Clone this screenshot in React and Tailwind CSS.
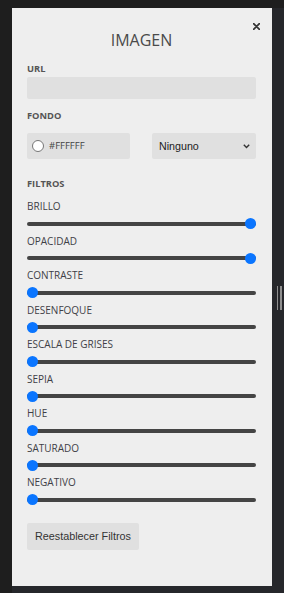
import React from 'react';

const FILTERS = [
    { name: 'BRILLO', max: true },
    { name: 'OPACIDAD', max: true },
    { name: 'CONTRASTE', max: false },
    { name: 'DESENFOQUE', max: false },
    { name: 'ESCALA DE GRISES', max: false },
    { name: 'SEPIA', max: false },
    { name: 'HUE', max: false },
    { name: 'SATURADO', max: false },
    { name: 'NEGATIVO', max: false },
];

const Slider = ({ max }) => (
    <div className="relative h-[11px] flex items-center">
        <div className="h-[4px] w-full rounded-full bg-[#444444]" />
        <div className={`absolute top-0 w-[11px] h-[11px] rounded-full bg-[#0a75ff] ${max ? 'right-0' : 'left-0'}`} />
    </div>
);

const SectionLabel = ({ children, className = '' }) => (
    <div className={`text-[9.3px] leading-[12px] font-bold text-[#555555] ${className}`}>{children}</div>
);

const App = () => {
    return (
        <div className="w-[284px] h-[593px] bg-[#1e1e1e] pt-2 pl-3 overflow-hidden font-['Open_Sans',sans-serif]">
            <div className="h-full flex bg-[#26272b]">
                {/* Panel */}
                <div className="relative w-[260px] h-[578px] shrink-0 bg-[#eeeeee] pt-[21px] pl-[15px] pr-[16px]">
                    <button className="absolute top-[15px] right-[12px] w-[7px] h-[7px]">
                        <svg viewBox="0 0 7 7" width="7" height="7" className="block">
                            <path d="M0.6 0.6 L6.4 6.4 M6.4 0.6 L0.6 6.4" stroke="#333333" strokeWidth="1.7" strokeLinecap="round" />
                        </svg>
                    </button>

                    <h1 className="text-center text-[16px] leading-[22px] text-[#4a4a4a]">IMAGEN</h1>

                    <SectionLabel className="mt-[12px]">URL</SectionLabel>
                    <div className="mt-[2px] h-[22px] w-full rounded-[2px] bg-[#e0e0e0]" />

                    <SectionLabel className="mt-[11px]">FONDO</SectionLabel>
                    <div className="mt-[11px] flex justify-between">
                        <div className="w-[103px] h-[26px] rounded-[2px] bg-[#e0e0e0] flex items-center pl-[5px] gap-[5px]">
                            <div className="w-[12px] h-[12px] rounded-full bg-white border border-[#767676]" />
                            <span className="text-[9.5px] text-[#444444]">#FFFFFF</span>
                        </div>
                        <div className="w-[104px] h-[26px] rounded-[2px] bg-[#e0e0e0] flex items-center justify-between pl-[7px] pr-[6px] font-['Liberation_Sans',Arial,sans-serif]">
                            <span className="text-[10.7px] text-[#222222]">Ninguno</span>
                            <svg viewBox="0 0 7 5" width="7" height="5" className="block">
                                <path d="M0.8 0.8 L3.5 3.6 L6.2 0.8" fill="none" stroke="#333333" strokeWidth="1.4" />
                            </svg>
                        </div>
                    </div>

                    <SectionLabel className="mt-[19px]">FILTROS</SectionLabel>
                    <div className="mt-[9px] flex flex-col gap-[4.5px]">
                        {FILTERS.map((f) => (
                            <div key={f.name}>
                                <div className="text-[10px] leading-[14px] text-[#3f3f46] mb-[5px]">{f.name}</div>
                                <Slider max={f.max} />
                            </div>
                        ))}
                    </div>

                    <button className="mt-[17.5px] h-[27px] px-[8px] rounded-[2px] bg-[#e0e0e0] text-[10.8px] text-[#333333] font-['Liberation_Sans',Arial,sans-serif]">
                        Reestablecer Filtros
                    </button>
                </div>

                {/* Resize handle */}
                <div className="flex-1 flex items-center justify-center pb-[5px] pl-[2px]">
                    <div className="flex gap-[2px]">
                        <div className="w-[1.5px] h-[24px] bg-[#8f8f8f]" />
                        <div className="w-[1.5px] h-[24px] bg-[#8f8f8f]" />
                    </div>
                </div>
            </div>
        </div>
    );
};

export default App;
